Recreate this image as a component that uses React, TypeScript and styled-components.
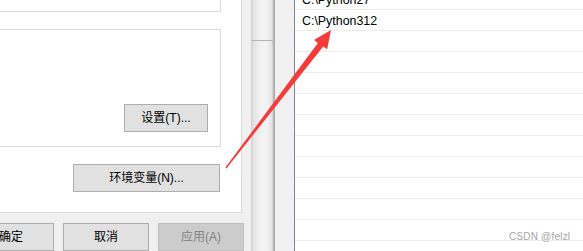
import React from "react";
import styled, { createGlobalStyle } from "styled-components";

const GlobalStyle = createGlobalStyle`
  body {
    margin: 0;
    font-family: "Liberation Sans", "Noto Sans CJK SC", sans-serif;
  }
`;

const paths = ["C:\\Python27", "C:\\Python312", "", "", "", "", "", "", "", "", "", "", ""];

const App = () => {
  return (
    <Screen>
      <GlobalStyle />
      <LeftDialog>
        <TabPage>
          <GroupBox h="11px" />
          <GroupBox h="102px" top>
            <Btn w="84px">设置(T)...</Btn>
          </GroupBox>
          <EnvBtn w="147px">环境变量(N)...</EnvBtn>
        </TabPage>
        <ButtonRow>
          <Btn w="86px">确定</Btn>
          <Btn w="86px">取消</Btn>
          <Btn w="86px" disabled>应用(A)</Btn>
        </ButtonRow>
      </LeftDialog>
      <Strip>
        <StripTop />
      </Strip>
      <Spacer />
      <ListPane>
        <List>
          {paths.map((p, i) => (
            <Row key={i}>{p}</Row>
          ))}
        </List>
      </ListPane>
      <Arrow width="583" height="251" viewBox="0 0 583 251">
        <polygon
          points="331,30 327.2,49.3 323.2,46.5 226.4,168.4 225.4,167.6 317.9,42.9 314,40.1"
          fill="#f53a3a"
        />
      </Arrow>
      <Watermark>CSDN @felzl</Watermark>
    </Screen>
  );
};

export default App;

const Screen = styled.div`
  position: relative;
  display: flex;
  width: 583px;
  height: 251px;
  overflow: hidden;
  background: #f0f0f0;
  font-size: 12px;
  color: #000;
`;

const LeftDialog = styled.div`
  width: 251px;
  flex-shrink: 0;
  display: flex;
  flex-direction: column;
`;

const TabPage = styled.div`
  width: 241px;
  height: 214px;
  box-sizing: content-box;
  background: #fff;
  border-right: 1px solid #d9d9d9;
  border-bottom: 1px solid #d9d9d9;
  display: flex;
  flex-direction: column;
  align-items: flex-end;
`;

const GroupBox = styled.div<{ h: string; top?: boolean }>`
  width: 220px;
  height: ${({ h }) => h};
  margin-right: 20px;
  margin-top: ${({ top }) => (top ? "17px" : "0")};
  border-right: 1px solid #dcdcdc;
  border-bottom: 1px solid #dcdcdc;
  border-top: ${({ top }) => (top ? "1px solid #dcdcdc" : "none")};
  display: flex;
  flex-direction: column;
  justify-content: flex-end;
  align-items: flex-end;
  padding: ${({ top }) => (top ? "0 12px 14px 0" : "0")};
  box-sizing: content-box;
`;

const Btn = styled.button<{ w: string }>`
  width: ${({ w }) => w};
  height: 28px;
  flex-shrink: 0;
  padding: 0;
  border: 1px solid #adadad;
  background: #e1e1e1;
  color: #000;
  font-family: "Liberation Sans", "Noto Sans CJK SC", sans-serif;
  font-size: 12px;
  line-height: 26px;
  text-align: center;

  &:disabled {
    background: #cccccc;
    border-color: #bfbfbf;
    color: #838383;
  }
`;

const EnvBtn = styled(Btn)`
  margin-top: 17px;
  margin-right: 21px;
`;

const ButtonRow = styled.div`
  display: flex;
  justify-content: flex-end;
  gap: 9px;
  padding: 10px 7px 0 0;
`;

const Strip = styled.div`
  width: 24px;
  flex-shrink: 0;
  background: linear-gradient(
    to right,
    #cfcfcf 0px,
    #e6e6e6 3px,
    #f2f2f2 10px,
    #f3f3f3 16px,
    #e2e2e2 21px,
    #a9a9a9 23px
  );
`;

const StripTop = styled.div`
  height: 40px;
  border-bottom: 1px solid #b5b5b5;
`;

const Spacer = styled.div`
  width: 19px;
  flex-shrink: 0;
`;

const ListPane = styled.div`
  flex: 1;
  background: #fff;
  border-left: 1px solid #80848c;
  overflow: hidden;
`;

const List = styled.div`
  margin-top: -11px;
`;

const Row = styled.div`
  height: 20px;
  line-height: 22px;
  padding-left: 7px;
  font-size: 12.4px;
  border-bottom: 1px solid #ececec;
  white-space: nowrap;
  overflow: hidden;
`;

const Arrow = styled.svg`
  position: absolute;
  left: 0;
  top: 0;
  pointer-events: none;
`;

const Watermark = styled.div`
  position: absolute;
  left: 509px;
  top: 231px;
  font-size: 10px;
  line-height: 12px;
  color: #a6a6a6;
  letter-spacing: 0.2px;
`;
